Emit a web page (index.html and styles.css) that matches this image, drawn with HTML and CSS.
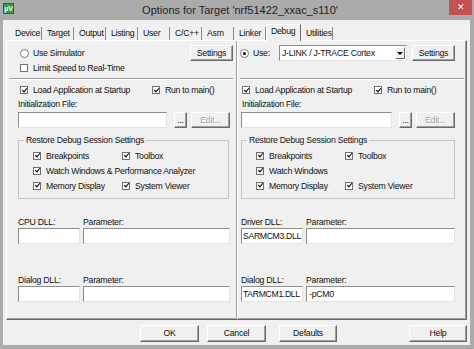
FILE: index.html
```html
<!DOCTYPE html>
<html>
<head>
<meta charset="utf-8">
<title>Options for Target</title>
<link rel="stylesheet" href="styles.css">
</head>
<body>
<div class="window">
  <div class="titlebar">
    <svg class="appicon" width="11" height="11" viewBox="0 0 11 11"><rect x="0.5" y="0.5" width="10" height="10" fill="#3b9a45" stroke="#22672a"/><text x="5.5" y="8.3" font-size="7" font-family="Liberation Sans" font-weight="bold" fill="#fff" text-anchor="middle">µV</text></svg>
    <div class="title">Options for Target 'nrf51422_xxac_s110'</div>
    <div class="close">✕</div>
  </div>
  <div class="client">
    <div class="tabs">
      <div class="tab">Device</div>
      <div class="tab">Target</div>
      <div class="tab">Output</div>
      <div class="tab">Listing</div>
      <div class="tab">User</div>
      <div class="tab">C/C++</div>
      <div class="tab">Asm</div>
      <div class="tab">Linker</div>
      <div class="tab sel">Debug</div>
      <div class="tab">Utilities</div>
    </div>
    <div class="panel">
      <div class="col left">
        <div class="row r1">
          <span class="opt"><span class="radio"></span>Use Simulator</span>
          <button class="btn set">Settings</button>
        </div>
        <div class="row r2"><span class="opt"><span class="cb"></span>Limit Speed to Real-Time</span></div>
        <div class="sep"></div>
        <div class="r3">
          <span class="opt"><span class="cb on"></span>Load Application at Startup</span>
          <span class="opt"><span class="cb on"></span>Run to main()</span>
        </div>
        <div class="row lbl">Initialization File:</div>
        <div class="row frow">
          <div class="input"></div>
          <button class="btn dots">...</button>
          <button class="btn edit">Edit...</button>
        </div>
        <fieldset class="grp">
          <legend>Restore Debug Session Settings</legend>
          <div class="grid">
            <span class="opt"><span class="cb on"></span>Breakpoints</span>
            <span class="opt"><span class="cb on"></span>Toolbox</span>
            <span class="opt wide"><span class="cb on"></span>Watch Windows &amp; Performance Analyzer</span>
            <span class="opt"><span class="cb on"></span>Memory Display</span>
            <span class="opt"><span class="cb on"></span>System Viewer</span>
          </div>
        </fieldset>
        <div class="dlll"><span>CPU DLL:</span><span>Parameter:</span></div>
        <div class="dlli"><div class="input"></div><div class="input"></div></div>
        <div class="dlll second"><span>Dialog DLL:</span><span>Parameter:</span></div>
        <div class="dlli"><div class="input"></div><div class="input"></div></div>
      </div>
      <div class="divider"></div>
      <div class="col right">
        <div class="row r1">
          <span class="opt"><span class="radio on"></span>Use:</span>
          <div class="combo"><span class="val">J-LINK / J-TRACE Cortex</span><span class="arrow"></span></div>
          <button class="btn set">Settings</button>
        </div>
        <div class="row r2"></div>
        <div class="sep"></div>
        <div class="r3">
          <span class="opt"><span class="cb on"></span>Load Application at Startup</span>
          <span class="opt"><span class="cb on"></span>Run to main()</span>
        </div>
        <div class="row lbl">Initialization File:</div>
        <div class="row frow">
          <div class="input"></div>
          <button class="btn dots">...</button>
          <button class="btn edit">Edit...</button>
        </div>
        <fieldset class="grp">
          <legend>Restore Debug Session Settings</legend>
          <div class="grid">
            <span class="opt"><span class="cb on"></span>Breakpoints</span>
            <span class="opt"><span class="cb on"></span>Toolbox</span>
            <span class="opt wide"><span class="cb on"></span>Watch Windows</span>
            <span class="opt"><span class="cb on"></span>Memory Display</span>
            <span class="opt"><span class="cb on"></span>System Viewer</span>
          </div>
        </fieldset>
        <div class="dlll"><span>Driver DLL:</span><span>Parameter:</span></div>
        <div class="dlli"><div class="input dllname">SARMCM3.DLL</div><div class="input"></div></div>
        <div class="dlll second"><span>Dialog DLL:</span><span>Parameter:</span></div>
        <div class="dlli"><div class="input dllname">TARMCM1.DLL</div><div class="input">-pCM0</div></div>
      </div>
    </div>
    <div class="footer">
      <button class="btn fbtn ok">OK</button>
      <button class="btn fbtn cancel">Cancel</button>
      <button class="btn fbtn defaults">Defaults</button>
      <button class="btn fbtn help">Help</button>
    </div>
  </div>
</div>
</body>
</html>
```

FILE: styles.css
```css
* { box-sizing: border-box; }
html, body { margin: 0; padding: 0; }
body {
  width: 474px;
  height: 349px;
  overflow: hidden;
  background: #aaaaaa;
  font-family: "Liberation Sans", Arial, sans-serif;
}
.window {
  width: 474px;
  height: 349px;
  background: #ababab;
  display: flex;
  flex-direction: column;
}
.titlebar {
  height: 20px;
  display: flex;
  align-items: flex-start;
  flex: none;
}
.appicon { margin: 3px 0 0 3px; flex: none; }
.title {
  flex: 1;
  text-align: center;
  font-size: 11px;
  line-height: 21px;
  color: #1e1e1e;
  padding-left: 17px;
  white-space: nowrap;
}
.close {
  width: 23px;
  height: 15px;
  margin-right: 2px;
  background: #c75050;
  color: #fff;
  font-size: 9px;
  line-height: 15px;
  text-align: center;
}
.client {
  flex: 1;
  margin: 0 4px 4px 3px;
  background: #f0f0f0;
  display: flex;
  flex-direction: column;
  font-size: 8.7px;
  letter-spacing: -0.25px;
  color: #111;
}
.tabs {
  height: 20px;
  flex: none;
  display: flex;
  align-items: flex-end;
  padding-left: 7px;
}
.tab {
  width: 32px;
  height: 13px;
  border-right: 1px solid #8a8a8a;
  padding-left: 5px;
  line-height: 12px;
  white-space: nowrap;
}
.tab.sel {
  width: 35px;
  height: 17px;
  margin-bottom: -1px;
  border-top: 1px solid #fff;
  border-left: 1px solid #fff;
  border-right: 1px solid #696969;
  background: #f0f0f0;
  position: relative;
  z-index: 1;
  padding-left: 4px;
}
.panel {
  height: 280px;
  flex: none;
  margin: 0 3px;
  border: 1px solid;
  border-color: #fff #696969 #696969 #fff;
  box-shadow: inset -1px -1px #a0a0a0;
  display: grid;
  grid-template-columns: 212px 11px 214px;
  padding: 0 11px;
}
.divider {
  width: 2px;
  margin-left: 6px;
  border-left: 1px solid #a0a0a0;
  border-right: 1px solid #fff;
}
.col {
  display: flex;
  flex-direction: column;
  padding-top: 4px;
  min-width: 0;
}
.row { display: flex; align-items: center; white-space: nowrap; }
.opt { display: flex; align-items: center; white-space: nowrap; }
.r1 { height: 16px; }
.left .r1, .left .r2 { padding-left: 2px; }
.left .r1 .set { margin-left: auto; margin-right: -3px; }
.right .r1 { margin-left: -1px; }
.r2 { height: 14px; }
.sep {
  height: 2px;
  margin-top: 3px;
  border-top: 1px solid #a0a0a0;
  border-bottom: 1px solid #fff;
}
.left .sep { margin-left: -9px; margin-right: -3px; }
.right .sep { margin-left: -1px; margin-right: -9px; }
.r3 {
  height: 14px;
  margin-top: 3px;
  display: grid;
  grid-template-columns: 132px auto;
  align-items: center;
}
.left .r3 { padding-left: 2px; }
.right .r3 { padding-left: 1px; }
.lbl { height: 14px; }
.right .lbl { padding-left: 1px; }
.frow { height: 16px; margin-top: 1px; align-items: stretch; }
.frow .input { flex: 1; }

.cb {
  width: 8px;
  height: 8px;
  border: 1px solid #707070;
  background: #fff;
  margin-right: 5px;
  position: relative;
  flex: none;
}
.cb.on::after {
  content: "";
  position: absolute;
  left: 1.5px;
  top: -0.5px;
  width: 2px;
  height: 4px;
  border: solid #000;
  border-width: 0 1.5px 1.5px 0;
  transform: rotate(40deg);
}
.radio {
  width: 9px;
  height: 9px;
  border-radius: 50%;
  border: 1px solid #7a7a7a;
  background: #fff;
  margin-right: 4px;
  position: relative;
  flex: none;
}
.radio.on::after {
  content: "";
  position: absolute;
  left: 2px;
  top: 2px;
  width: 3px;
  height: 3px;
  border-radius: 50%;
  background: #000;
}

.btn {
  font: inherit;
  letter-spacing: inherit;
  color: #111;
  background: #f0f0f0;
  border: 1px solid;
  border-color: #fff #6a6a6a #6a6a6a #fff;
  box-shadow: inset -1px -1px #a0a0a0;
  padding: 0;
  margin: 0;
  height: 16px;
  line-height: 13px;
  text-align: center;
  white-space: nowrap;
}
.btn.dots { width: 13px; margin-left: 7px; }
.btn.edit {
  width: 39px;
  margin-left: 4px;
  color: #a3a3a3;
  text-shadow: 1px 1px #fff;
}
.set { width: 43px; flex: none; }
.right .set { margin-left: 5px; }

.input {
  background: #fff;
  border: 1px solid;
  border-color: #8d8d8d #e3e3e3 #e3e3e3 #8d8d8d;
  padding-left: 2px;
  line-height: 14px;
  white-space: nowrap;
  overflow: hidden;
}
.input.dllname { padding-left: 1px; letter-spacing: -0.35px; }

.combo {
  width: 128px;
  height: 16px;
  margin-left: auto;
  display: flex;
  background: #fff;
  border: 1px solid;
  border-color: #8d8d8d #e3e3e3 #e3e3e3 #8d8d8d;
}
.combo .val { flex: 1; padding-left: 2px; line-height: 14px; white-space: nowrap; }
.combo .arrow {
  width: 10px;
  margin: 1px;
  background: #f0f0f0;
  border: 1px solid;
  border-color: #fff #6a6a6a #6a6a6a #fff;
  display: flex;
  align-items: center;
  justify-content: center;
}
.combo .arrow::after {
  content: "";
  border-left: 3px solid transparent;
  border-right: 3px solid transparent;
  border-top: 3px solid #000;
}

.grp {
  margin: 6px 1px 0 0;
  padding: 2px 0 5px 5px;
  border: 1px solid #c4c4c4;
  min-width: 0;
}
.right .grp { margin-right: 0; }
.grp legend {
  padding: 0 2px;
  line-height: 12px;
  white-space: nowrap;
}
.grid {
  display: grid;
  grid-template-columns: 89px auto;
  grid-auto-rows: 15px;
  align-items: center;
  padding-left: 9px;
}
.grid .wide { grid-column: 1 / -1; }

.dlll {
  display: grid;
  grid-template-columns: 62px 1fr;
  column-gap: 3px;
  height: 13px;
  margin-top: 16px;
  align-items: center;
  white-space: nowrap;
}
.dlll.second { margin-top: 29px; }
.dlli {
  display: grid;
  grid-template-columns: 62px 1fr;
  column-gap: 3px;
  height: 16px;
}

.footer {
  height: 25px;
  flex: none;
  display: flex;
  justify-content: flex-end;
  align-items: flex-start;
  padding: 5px 3px 0 0;
}
.btn.fbtn { width: 59px; height: 17px; }
.btn.cancel { margin-left: 8px; }
.btn.defaults { margin-left: 13px; width: 58px; }
.btn.help { margin-left: 72px; width: 58px; }
```
